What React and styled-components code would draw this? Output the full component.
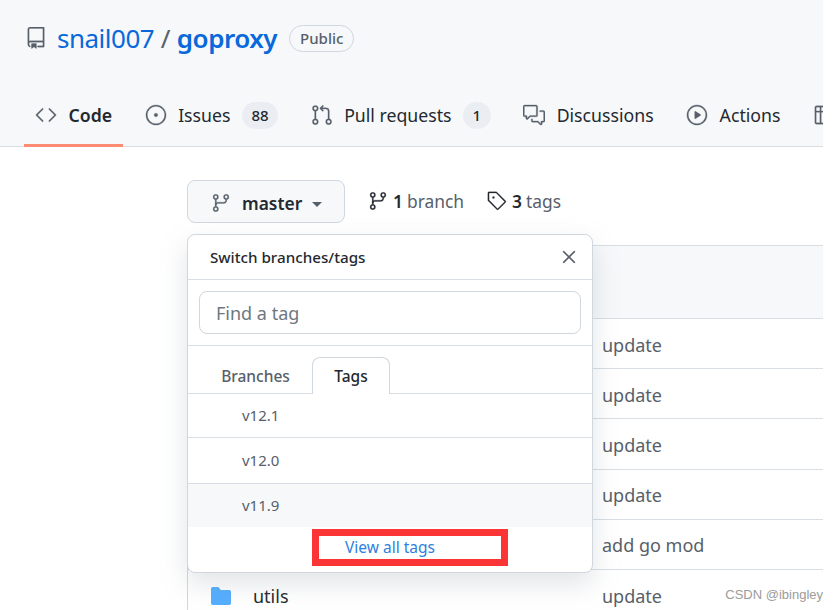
import styled, { createGlobalStyle } from 'styled-components'
import {
  GoRepo, GoCode, GoIssueOpened, GoGitPullRequest, GoCommentDiscussion,
  GoPlay, GoTable, GoGitBranch, GoTag, GoX, GoFileDirectoryFill,
} from 'react-icons/go'

const GlobalStyle = createGlobalStyle`
  html, body {
    margin: 0;
    background: #fff;
    font-family: "Noto Sans", "Open Sans", sans-serif;
    color: #24292f;
  }
  * { box-sizing: border-box; }
`

const Page = styled.div`
  width: 823px;
  height: 610px;
  overflow: hidden;
  position: relative;
`

const Header = styled.header`
  height: 147px;
  background: #f6f8fa;
  border-bottom: 1px solid #d8dee4;
  padding: 24px 0 0 27px;
`

const TitleRow = styled.div`
  display: flex;
  align-items: center;
  height: 28px;
  color: #57606a;
  font-size: 26px;
`

const RepoIcon = styled(GoRepo)`
  font-size: 22px;
  margin-right: 10px;
  margin-left: -2px;
  stroke: currentColor;
  stroke-width: 0.3;
`

const Owner = styled.a`
  color: #0969da;
  letter-spacing: -0.5px;
`

const Slash = styled.span`
  margin: 0 6.5px;
  color: #57606a;
`

const RepoName = styled.a`
  color: #0969da;
  font-weight: 600;
  letter-spacing: -0.5px;
`

const Badge = styled.span`
  margin-left: 12px;
  height: 27px;
  padding: 0 10px;
  display: flex;
  align-items: center;
  border: 1px solid #d0d7de;
  border-radius: 14px;
  font-size: 15px;
  font-weight: 500;
  color: #57606a;
`

const Tabs = styled.nav`
  display: flex;
  gap: 10.5px;
  margin: 38px 0 0 -3px;
  height: 57px;
`

const Tab = styled.a`
  display: flex;
  align-items: center;
  flex-shrink: 0;
  gap: 11.5px;
  padding: 0 11px 4px;
  font-size: 17.7px;
  white-space: nowrap;
  color: #24292f;
  font-weight: ${(p) => (p.$active ? 600 : 400)};
  border-bottom: 3px solid ${(p) => (p.$active ? '#fd8c73' : 'transparent')};

  svg {
    font-size: 22px;
    color: #57606a;
    stroke: currentColor;
    stroke-width: 0.3;
  }
`

const Counter = styled.span`
  min-width: 27px;
  height: 27px;
  padding: 0 9.5px;
  border-radius: 14px;
  background: #eaeef2;
  display: flex;
  align-items: center;
  justify-content: center;
  font-size: 15px;
  font-weight: 500;
`

const Main = styled.main`
  position: relative;
  padding: 33px 0 0 187px;
`

const Toolbar = styled.div`
  display: flex;
  align-items: center;
  height: 43px;
`

const BranchButton = styled.button`
  display: flex;
  align-items: center;
  width: 158px;
  height: 43px;
  padding: 2px 0 0 23px;
  background: #f6f8fa;
  border: 1px solid #d0d7de;
  border-radius: 8px;
  font: 600 17.4px "Noto Sans", sans-serif;
  color: #24292f;

  svg {
    font-size: 20px;
    color: #57606a;
    margin-right: 11px;
    stroke: currentColor;
    stroke-width: 0.3;
  }
`

const Caret = styled.span`
  margin-left: 10px;
  margin-top: 3px;
  border-top: 5px solid #57606a;
  border-left: 5.5px solid transparent;
  border-right: 5.5px solid transparent;
`

const Stat = styled.a`
  display: flex;
  align-items: center;
  margin-left: 23px;
  margin-top: -2px;
  font-size: 17.4px;
  color: #57606a;
  white-space: nowrap;

  svg {
    font-size: 20px;
    color: #24292f;
    margin-right: 5px;
    stroke: currentColor;
    stroke-width: 0.3;
  }

  b {
    font-weight: 600;
    color: #24292f;
    margin-right: 4px;
  }
`

const FileTable = styled.section`
  margin-top: 22px;
  width: 660px;
  border-left: 1px solid #d0d7de;
  border-top: 1px solid #d8dee4;
`

const TableHead = styled.div`
  height: 72px;
  background: #f6f8fa;
`

const FileRow = styled.div`
  display: grid;
  grid-template-columns: 65px 349px 1fr;
  align-items: center;
  height: 50.2px;
  padding-top: 2px;
  border-top: 1px solid #d8dee4;
  font-size: 18px;
  color: #57606a;
`

const FolderCell = styled.span`
  display: flex;
  padding-left: 21px;
  font-size: 24px;
  color: #54aeff;
`

const FileName = styled.span`
  color: #24292f;
`

const Dropdown = styled.div`
  position: absolute;
  left: 187px;
  top: 87px;
  width: 406px;
  height: 339px;
  background: #fff;
  border: 1px solid #d0d7de;
  border-radius: 8px;
  box-shadow: 0 11px 27px rgba(140, 149, 159, 0.25);
  overflow: hidden;
`

const MenuHeader = styled.div`
  display: flex;
  align-items: center;
  justify-content: space-between;
  height: 45px;
  padding: 0 12px 0 22px;
  font-size: 15.2px;
  font-weight: 500;
  border-bottom: 1px solid #d8dee4;

  svg {
    font-size: 22px;
    color: #57606a;
    stroke: currentColor;
    stroke-width: 0.4;
  }
`

const FilterBox = styled.div`
  height: 66px;
  padding: 11px 11px 0;
  border-bottom: 1px solid #d8dee4;
`

const FilterInput = styled.input`
  width: 100%;
  height: 43px;
  padding: 0 16px;
  border: 1px solid #d0d7de;
  border-radius: 8px;
  font: 18px "Noto Sans", sans-serif;
  color: #24292f;

  &::placeholder {
    color: #6e7781;
    opacity: 1;
  }
`

const MenuTabs = styled.div`
  display: flex;
  height: 48px;
  padding: 11px 0 0 11px;
  border-bottom: 1px solid #d8dee4;
`

const MenuTab = styled.span`
  width: ${(p) => (p.$active ? '78px' : '113px')};
  height: 37px;
  display: flex;
  align-items: center;
  justify-content: center;
  font-size: 15.5px;
  font-weight: 500;
  color: ${(p) => (p.$active ? '#24292f' : '#57606a')};
  background: ${(p) => (p.$active ? '#fff' : 'transparent')};
  border: ${(p) => (p.$active ? '1px solid #d0d7de' : 'none')};
  border-bottom: none;
  border-radius: 8px 8px 0 0;
`

const TagRow = styled.div`
  height: ${(p) => p.$height}px;
  display: flex;
  align-items: center;
  padding: 0 0 ${(p) => (p.$current ? '2px' : '1px')} 54px;
  font-size: 15px;
  color: #57606a;
  background: ${(p) => (p.$current ? '#f6f8fa' : '#fff')};
  border-bottom: ${(p) => (p.$current ? 'none' : '1px solid #d8dee4')};
`

const MenuFooter = styled.div`
  padding: 2px 0 0 124px;
`

const ViewAll = styled.a`
  display: block;
  width: 196px;
  height: 37px;
  padding: 0 0 0 26px;
  border: 7px solid #fb3535;
  font-size: 15.5px;
  line-height: 22px;
  color: #2f7fe0;
`

const Watermark = styled.span`
  position: absolute;
  right: 0;
  bottom: 8px;
  font: 13px "Liberation Sans", sans-serif;
  color: #9b9b9b;
`

const tabs = [
  { label: 'Code', icon: GoCode, active: true },
  { label: 'Issues', icon: GoIssueOpened, count: 88 },
  { label: 'Pull requests', icon: GoGitPullRequest, count: 1 },
  { label: 'Discussions', icon: GoCommentDiscussion },
  { label: 'Actions', icon: GoPlay },
  // only the icon of this tab is on screen, the label runs past the edge
  { icon: GoTable },
]

const rows = [
  { message: 'update' },
  { message: 'update' },
  { message: 'update' },
  { message: 'update' },
  { message: 'add go mod' },
  { message: 'update', name: 'utils' },
]

const tags = [
  { name: 'v12.1', height: 44 },
  { name: 'v12.0', height: 46 },
  { name: 'v11.9', height: 43, current: true },
]

export default function App() {
  return (
    <Page>
      <GlobalStyle />
      <Header>
        <TitleRow>
          <RepoIcon />
          <Owner>snail007</Owner>
          <Slash>/</Slash>
          <RepoName>goproxy</RepoName>
          <Badge>Public</Badge>
        </TitleRow>
        <Tabs>
          {tabs.map(({ label, icon: Icon, active, count }, i) => (
            <Tab key={i} $active={active}>
              <Icon />
              {label}
              {count && <Counter>{count}</Counter>}
            </Tab>
          ))}
        </Tabs>
      </Header>

      <Main>
        <Toolbar>
          <BranchButton>
            <GoGitBranch />
            master
            <Caret />
          </BranchButton>
          <Stat>
            <GoGitBranch />
            <b>1</b> branch
          </Stat>
          <Stat>
            <GoTag />
            <b>3</b> tags
          </Stat>
        </Toolbar>

        <FileTable>
          <TableHead />
          {rows.map((row, i) => (
            <FileRow key={i}>
              <FolderCell>{row.name && <GoFileDirectoryFill />}</FolderCell>
              <FileName>{row.name}</FileName>
              <span>{row.message}</span>
            </FileRow>
          ))}
        </FileTable>

        {/* Branch/tag menu sits over the file list */}
        <Dropdown>
          <MenuHeader>
            Switch branches/tags
            <GoX />
          </MenuHeader>
          <FilterBox>
            <FilterInput placeholder="Find a tag" readOnly />
          </FilterBox>
          <MenuTabs>
            <MenuTab>Branches</MenuTab>
            <MenuTab $active>Tags</MenuTab>
          </MenuTabs>
          {tags.map((tag) => (
            <TagRow key={tag.name} $height={tag.height} $current={tag.current}>
              {tag.name}
            </TagRow>
          ))}
          <MenuFooter>
            <ViewAll>View all tags</ViewAll>
          </MenuFooter>
        </Dropdown>
      </Main>

      <Watermark>CSDN @ibingley</Watermark>
    </Page>
  )
}
